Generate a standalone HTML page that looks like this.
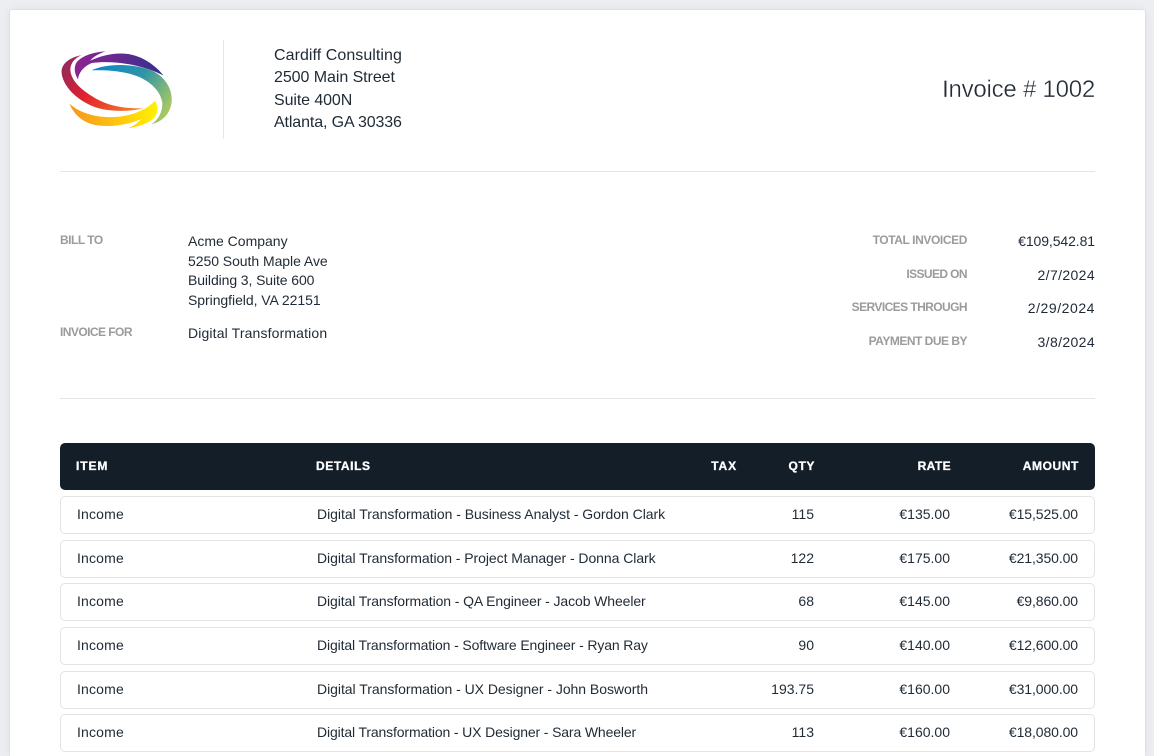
<!DOCTYPE html>
<html><head><meta charset="utf-8"><style>
html,body{margin:0;padding:0;width:1154px;height:756px;overflow:hidden;background:#eceef1;font-family:"Liberation Sans",sans-serif;color:#1f2a35}
#wrap{position:absolute;left:0;top:0;width:1154px;height:756px;overflow:hidden}
#card{position:absolute;left:10px;top:10px;width:1135px;height:746px;background:#fff;border-radius:2px 2px 0 0;box-shadow:0 0 1px rgba(0,0,0,.2),0 0 9px rgba(0,0,0,.07)}
.t{position:absolute;white-space:nowrap;line-height:20px;font-size:14px}
.r{text-align:right}
.l{font-size:12px;font-weight:bold;color:#9b9b9b;letter-spacing:-.5px}
.h{font-size:12px;font-weight:bold;color:#fff;letter-spacing:.9px;-webkit-text-stroke:.3px #fff}
.hl{position:absolute;left:60px;width:1035px;height:1px;background:#e3e5e8}
.row{position:absolute;left:60px;width:1033px;height:36px;border:1px solid #e2e3e5;border-radius:5px;background:#fff}
.i{letter-spacing:.17px}
</style></head><body>
<div id="wrap">
<div id="card"></div>
<svg style="position:absolute;left:40px;top:30px" width="160" height="120" viewBox="0 0 480 360">
<defs>
<linearGradient id="a" gradientUnits="userSpaceOnUse" x1="70" y1="90" x2="300" y2="240"><stop offset="0" stop-color="#8e2a5f"/><stop offset=".4" stop-color="#e0202e"/><stop offset="1" stop-color="#f7842a"/></linearGradient>
<linearGradient id="b" gradientUnits="userSpaceOnUse" x1="110" y1="100" x2="370" y2="120"><stop offset="0" stop-color="#8c2390"/><stop offset="1" stop-color="#35308f"/></linearGradient>
<linearGradient id="c" gradientUnits="userSpaceOnUse" x1="160" y1="115" x2="390" y2="260"><stop offset="0" stop-color="#0a86c8"/><stop offset=".5" stop-color="#2e95a5"/><stop offset="1" stop-color="#b7cf5a"/></linearGradient>
<linearGradient id="d" gradientUnits="userSpaceOnUse" x1="90" y1="240" x2="350" y2="250"><stop offset="0" stop-color="#f7941d"/><stop offset=".6" stop-color="#ffc90d"/><stop offset="1" stop-color="#fff200"/></linearGradient>
</defs>
<path fill="url(#a)" d="M125 75C85 84 62 103 65 130C70 175 125 225 190 238C230 245 275 244 308 235C265 236 215 231 172 208C130 184 92 155 91 118C92 98 105 84 125 75Z"/>
<path fill="url(#b)" d="M197 64C160 66 122 78 108 100C100 118 106 135 114 148C116 128 130 110 155 99C225 90 310 105 371 137C345 105 310 80 265 72C235 68 200 70 150 92C160 80 178 70 197 64Z"/>
<path fill="url(#c)" d="M155 121C200 100 275 100 332 120C378 140 398 180 395 215C392 250 368 275 334 283C356 268 368 245 367 218C362 188 340 162 302 143C260 124 205 119 155 121Z"/>
<path fill="url(#d)" d="M88 220C115 248 170 264 225 261C275 258 320 240 345 212C358 235 354 257 332 272C315 284 290 291 264 295C280 288 295 278 304 267C265 284 215 293 165 285C125 276 100 250 88 220Z"/>
</svg>
<div style="position:absolute;left:223px;top:40px;width:1px;height:99px;background:#e6e7e9"></div>
<div class="t" style="left:274px;top:46px;font-size:16px;letter-spacing:.06px">Cardiff Consulting</div>
<div class="t" style="left:274px;top:68px;font-size:16px;letter-spacing:-.06px">2500 Main Street</div>
<div class="t" style="left:274px;top:91px;font-size:16px;letter-spacing:-.1px">Suite 400N</div>
<div class="t" style="left:274px;top:113px;font-size:16px;letter-spacing:-.12px">Atlanta, GA 30336</div>
<div class="t r" style="right:59px;top:76px;font-size:24px;line-height:28px;font-weight:normal;color:#222b36;letter-spacing:-.23px;-webkit-text-stroke:.35px #fff">Invoice # 1002</div>
<div class="hl" style="top:171px"></div>
<div class="hl" style="top:398px"></div>

<div class="t l" style="left:60px;top:230px">BILL TO</div>
<div class="t l" style="left:60px;top:322px;letter-spacing:-.55px">INVOICE FOR</div>
<div class="t" style="left:188px;top:231px">Acme Company</div>
<div class="t" style="left:188px;top:251px;letter-spacing:-.05px">5250 South Maple Ave</div>
<div class="t" style="left:188px;top:270px;letter-spacing:-.1px">Building 3, Suite 600</div>
<div class="t" style="left:188px;top:290px;letter-spacing:-.05px">Springfield, VA 22151</div>
<div class="t" style="left:188px;top:323px;letter-spacing:.14px">Digital Transformation</div>

<div class="t l r" style="right:187px;top:230px;letter-spacing:-.4px">TOTAL INVOICED</div>
<div class="t l r" style="right:187px;top:264px;letter-spacing:-.6px">ISSUED ON</div>
<div class="t l r" style="right:187px;top:297px;letter-spacing:-.57px">SERVICES THROUGH</div>
<div class="t l r" style="right:187px;top:331px">PAYMENT DUE BY</div>
<div class="t r" style="right:59px;top:231px;letter-spacing:-.09px">€109,542.81</div>
<div class="t r" style="right:59px;top:265px;letter-spacing:.37px">2/7/2024</div>
<div class="t r" style="right:59px;top:298px;letter-spacing:.55px">2/29/2024</div>
<div class="t r" style="right:59px;top:332px;letter-spacing:.37px">3/8/2024</div>

<div style="position:absolute;left:60px;top:443px;width:1035px;height:47px;background:#141e29;border-radius:5px"></div>
<div class="t h" style="left:76px;top:456px">ITEM</div>
<div class="t h" style="left:316px;top:456px;letter-spacing:.6px">DETAILS</div>
<div class="t h r" style="right:417px;top:456px">TAX</div>
<div class="t h r" style="right:339px;top:456px;letter-spacing:.6px">QTY</div>
<div class="t h r" style="right:203px;top:456px;letter-spacing:.4px">RATE</div>
<div class="t h r" style="right:75px;top:456px;letter-spacing:.6px">AMOUNT</div>

<div class="row" style="top:496px"></div>
<div class="t i" style="left:77px;top:504px">Income</div><div class="t" style="left:317px;top:504px;letter-spacing:-.036px">Digital Transformation - Business Analyst - Gordon Clark</div><div class="t r" style="right:340px;top:504px">115</div><div class="t r" style="right:204px;top:504px">€135.00</div><div class="t r" style="right:76px;top:504px;letter-spacing:-.1px">€15,525.00</div>

<div class="row" style="top:540px"></div>
<div class="t i" style="left:77px;top:548px">Income</div><div class="t" style="left:317px;top:548px;letter-spacing:-.055px">Digital Transformation - Project Manager - Donna Clark</div><div class="t r" style="right:340px;top:548px">122</div><div class="t r" style="right:204px;top:548px">€175.00</div><div class="t r" style="right:76px;top:548px;letter-spacing:-.1px">€21,350.00</div>

<div class="row" style="top:583px"></div>
<div class="t i" style="left:77px;top:591px">Income</div><div class="t" style="left:317px;top:591px;letter-spacing:-.1px">Digital Transformation - QA Engineer - Jacob Wheeler</div><div class="t r" style="right:340px;top:591px">68</div><div class="t r" style="right:204px;top:591px">€145.00</div><div class="t r" style="right:76px;top:591px;letter-spacing:-.1px">€9,860.00</div>

<div class="row" style="top:627px"></div>
<div class="t i" style="left:77px;top:635px">Income</div><div class="t" style="left:317px;top:635px;letter-spacing:-.13px">Digital Transformation - Software Engineer - Ryan Ray</div><div class="t r" style="right:340px;top:635px">90</div><div class="t r" style="right:204px;top:635px">€140.00</div><div class="t r" style="right:76px;top:635px;letter-spacing:-.1px">€12,600.00</div>

<div class="row" style="top:671px"></div>
<div class="t i" style="left:77px;top:679px">Income</div><div class="t" style="left:317px;top:679px;letter-spacing:-.04px">Digital Transformation - UX Designer - John Bosworth</div><div class="t r" style="right:340px;top:679px">193.75</div><div class="t r" style="right:204px;top:679px">€160.00</div><div class="t r" style="right:76px;top:679px;letter-spacing:-.1px">€31,000.00</div>

<div class="row" style="top:714px"></div>
<div class="t i" style="left:77px;top:722px">Income</div><div class="t" style="left:317px;top:722px;letter-spacing:-.137px">Digital Transformation - UX Designer - Sara Wheeler</div><div class="t r" style="right:340px;top:722px">113</div><div class="t r" style="right:204px;top:722px">€160.00</div><div class="t r" style="right:76px;top:722px;letter-spacing:-.1px">€18,080.00</div>
</div>
</body></html>
